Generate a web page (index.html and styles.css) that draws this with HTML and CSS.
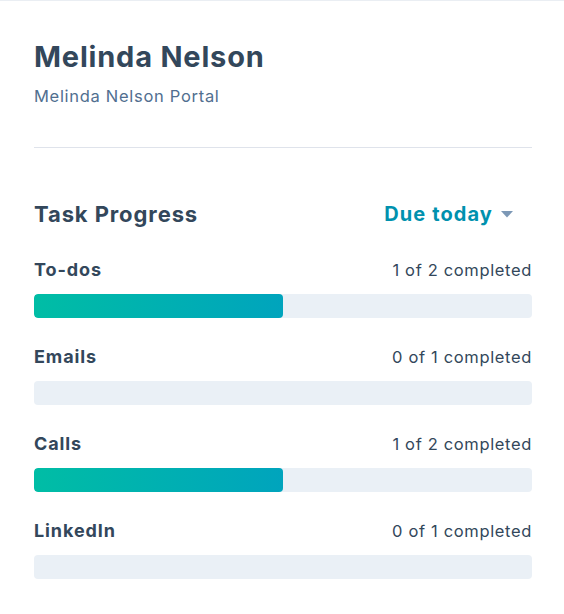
FILE: index.html
```html
<!DOCTYPE html>
<html>
<head>
<meta charset="utf-8">
<link rel="stylesheet" href="styles.css">
</head>
<body>
<div class="card">
  <header class="head">
    <h1 class="name">Melinda Nelson</h1>
    <p class="portal">Melinda Nelson Portal</p>
  </header>
  <section class="progress">
    <div class="progress-head">
      <h2 class="title">Task Progress</h2>
      <button class="filter">Due today <svg class="caret" width="12" height="7" viewBox="0 0 12 7"><path d="M0 0h12L6 6.5z" fill="#7c98b6"/></svg></button>
    </div>
    <div class="row">
      <div class="row-top"><span class="label">To-dos</span><span class="count">1 of 2 completed</span></div>
      <div class="bar"><div class="fill" style="width:50%"></div></div>
    </div>
    <div class="row">
      <div class="row-top"><span class="label">Emails</span><span class="count">0 of 1 completed</span></div>
      <div class="bar"><div class="fill" style="width:0%"></div></div>
    </div>
    <div class="row">
      <div class="row-top"><span class="label">Calls</span><span class="count">1 of 2 completed</span></div>
      <div class="bar"><div class="fill" style="width:50%"></div></div>
    </div>
    <div class="row">
      <div class="row-top"><span class="label">LinkedIn</span><span class="count">0 of 1 completed</span></div>
      <div class="bar"><div class="fill" style="width:0%"></div></div>
    </div>
  </section>
</div>
</body>
</html>
```
FILE: styles.css
```css
html, body {
  margin: 0;
  padding: 0;
  background: #ffffff;
}
body {
  font-family: "Inter", "Lato", sans-serif;
  color: #33475b;
}
.card {
  border-top: 1px solid #eaeef3;
  padding: 0 32px 0 34px;
}
.head {
  padding-top: 38px;
  padding-bottom: 41px;
  border-bottom: 1px solid #dfe3eb;
}
.name {
  margin: 0;
  font-size: 29px;
  line-height: 36px;
  font-weight: 700;
  letter-spacing: 0.8px;
  color: #33475b;
}
.portal {
  margin: 11px 0 0;
  font-size: 16.5px;
  line-height: 20px;
  letter-spacing: 0.7px;
  color: #516f90;
}
.progress {
  padding-top: 51px;
}
.progress-head {
  display: flex;
  justify-content: space-between;
  align-items: center;
  height: 30px;
}
.title {
  margin: 0;
  font-size: 22px;
  font-weight: 700;
  line-height: 30px;
  letter-spacing: 0.9px;
}
.filter {
  border: 0;
  background: none;
  padding: 0;
  margin-right: 19px;
  font-family: inherit;
  font-size: 20px;
  font-weight: 700;
  letter-spacing: 1.1px;
  color: #0091ae;
  display: flex;
  align-items: center;
  gap: 8px;
}
.caret {
  display: block;
}
.row {
  margin-top: 30px;
}
.row + .row {
  margin-top: 28px;
}
.row-top {
  display: flex;
  justify-content: space-between;
  align-items: baseline;
  height: 24px;
}
.label {
  font-size: 18px;
  font-weight: 700;
  letter-spacing: 0.9px;
  color: #33475b;
}
.count {
  font-size: 16.5px;
  letter-spacing: 0.65px;
  color: #33475b;
}
.bar {
  margin-top: 11px;
  height: 24px;
  border-radius: 4px;
  background: #eaf0f6;
  overflow: hidden;
}
.fill {
  height: 100%;
  border-radius: 4px;
  background: linear-gradient(90deg, #00bda5, #00a4bd);
}
```
